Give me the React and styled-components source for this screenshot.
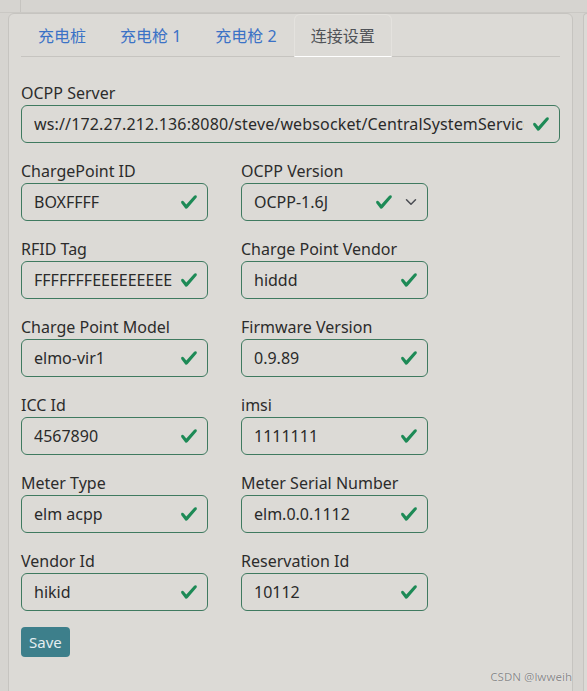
import React from 'react';
import styled, { createGlobalStyle } from 'styled-components';

const fields = [
  [
    { label: 'ChargePoint ID', value: 'BOXFFFF' },
    { label: 'OCPP Version', value: 'OCPP-1.6J', select: true },
  ],
  [
    { label: 'RFID Tag', value: 'FFFFFFFEEEEEEEEE' },
    { label: 'Charge Point Vendor', value: 'hiddd' },
  ],
  [
    { label: 'Charge Point Model', value: 'elmo-vir1' },
    { label: 'Firmware Version', value: '0.9.89' },
  ],
  [
    { label: 'ICC Id', value: '4567890' },
    { label: 'imsi', value: '1111111' },
  ],
  [
    { label: 'Meter Type', value: 'elm acpp' },
    { label: 'Meter Serial Number', value: 'elm.0.0.1112' },
  ],
  [
    { label: 'Vendor Id', value: 'hikid' },
    { label: 'Reservation Id', value: '10112' },
  ],
];

const tabs = ['充电桩', '充电枪 1', '充电枪 2', '连接设置'];

const Check = () => (
  <CheckIcon viewBox="0 0 8 8">
    <path
      fill="#1d8a56"
      d="M2.3 6.73.6 4.53c-.4-1.04.46-1.4 1.1-.8l1.1 1.4 3.4-3.8c.6-.63 1.6-.27 1.2.7l-4 4.6c-.43.5-.8.4-1.1.1z"
    />
  </CheckIcon>
);

const Chevron = () => (
  <ChevronIcon viewBox="0 0 16 16">
    <path
      d="m2 5 6 6 6-6"
      fill="none"
      stroke="#4a4c52"
      strokeWidth="2"
      strokeLinecap="round"
      strokeLinejoin="round"
    />
  </ChevronIcon>
);

const Field = ({ label, value, select }) => (
  <Group>
    <Label>{label}</Label>
    <Input select={select}>
      <Value>{value}</Value>
      <Check />
      {select && <Chevron />}
    </Input>
  </Group>
);

const App = () => {
  return (
    <>
      <GlobalStyles />
      <Page>
        <TopStrip>
          <PrevBox />
        </TopStrip>
        <Row>
          <Card>
            <TabList>
              {tabs.map((t, i) => (
                <Tab key={t} active={i === 3}>{t}</Tab>
              ))}
            </TabList>
            <Form>
              <Group>
                <Label>OCPP Server</Label>
                <Input>
                  <Value wide>ws://172.27.212.136:8080/steve/websocket/CentralSystemService</Value>
                  <Check />
                </Input>
              </Group>
              {fields.map((row, i) => (
                <Grid key={i}>
                  {row.map((f) => (
                    <Field key={f.label} {...f} />
                  ))}
                </Grid>
              ))}
              <SaveButton>Save</SaveButton>
            </Form>
            <Watermark>CSDN @lwweih</Watermark>
          </Card>
          <Side />
        </Row>
      </Page>
    </>
  );
};

export default App;

const Page = styled.div`
  background: #d6d4d0;
  min-height: 100vh;
  overflow: hidden;
`;

const TopStrip = styled.div`
  height: 13px;
  border-bottom: 1px solid #cac8c4;
  padding-left: 20px;
`;

const PrevBox = styled.div`
  height: 100%;
  border-left: 1px solid #c6c4c0;
`;

const Row = styled.div`
  display: flex;
  padding-left: 8px;
`;

const Card = styled.div`
  position: relative;
  width: 565px;
  min-height: 700px;
  flex-shrink: 0;
  background: #dcdad6;
  border: 1px solid #c6c4c0;
  border-radius: 6px 6px 0 0;
  padding: 0 12px;
`;

const Side = styled.div`
  flex: 1;
  margin-left: 10px;
  min-height: 700px;
  border-left: 1px solid #c6c4c0;
  border-top: 1px solid #c6c4c0;
  border-top-left-radius: 6px;
  background: #dcdad6;
`;

const TabList = styled.div`
  display: flex;
  border-bottom: 1px solid #c6c4c0;
`;

const Tab = styled.div`
  padding: 9px 16px 8px;
  line-height: 24px;
  font-size: 16px;
  margin-bottom: -1px;
  border: 1px solid transparent;
  border-radius: 6px 6px 0 0;
  color: ${({ active }) => (active ? '#4f5257' : '#3b72c6')};
  ${({ active }) =>
    active &&
    `
    border-color: #e4e2de #e4e2de #ffffff;
    background: #dcdad6;
  `}
`;

const Form = styled.div`
  padding-top: 24px;
`;

const Grid = styled.div`
  display: grid;
  grid-template-columns: 187px 187px;
  column-gap: 33px;
`;

const Group = styled.div`
  margin-bottom: 16px;
`;

const Label = styled.div`
  font-size: 16px;
  line-height: 24px;
  color: #2c2c2c;
`;

const Input = styled.div`
  display: flex;
  align-items: center;
  height: 38px;
  border: 1px solid #3f7a60;
  border-radius: 6px;
  padding: 0 ${({ select }) => (select ? '10px' : '9px')} 0 12px;
  font-size: 16px;
  color: #2a2a2a;
`;

const Value = styled.span`
  flex: 1;
  min-width: 0;
  overflow: hidden;
  white-space: nowrap;
  margin-right: 8px;
  letter-spacing: ${({ wide }) => (wide ? '0.14px' : 'normal')};
`;

const CheckIcon = styled.svg`
  width: 18px;
  height: 18px;
  flex-shrink: 0;
`;

const ChevronIcon = styled.svg`
  width: 12px;
  height: 12px;
  margin-left: 12px;
  flex-shrink: 0;
`;

const SaveButton = styled.button`
  display: flex;
  align-items: center;
  height: 30px;
  padding: 0 8px;
  border: none;
  border-radius: 4px;
  background: #3d7f8b;
  color: #e4eef0;
  font-size: 15px;
  font-family: 'Noto Sans', sans-serif;
  cursor: pointer;
`;

const Watermark = styled.div`
  position: absolute;
  right: 0px;
  top: 655px;
  font-size: 11.5px;
  color: #8c8c8c;
  text-shadow: 0 0 1px #ffffff;
`;

const GlobalStyles = createGlobalStyle`
* {
  margin: 0;
  padding: 0;
  box-sizing: border-box;
}
body {
  font-family: 'Noto Sans', 'Noto Sans CJK SC', sans-serif;
}
`;
